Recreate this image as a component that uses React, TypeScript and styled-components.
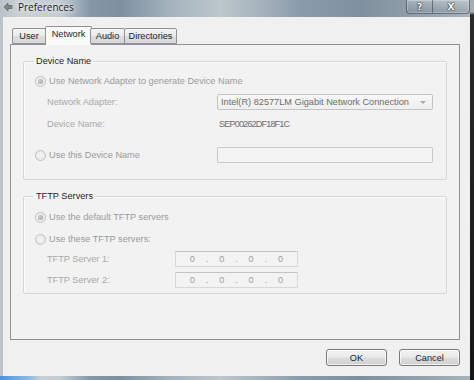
import React from "react";
import styled, { createGlobalStyle, css } from "styled-components";

const Global = createGlobalStyle`
  html, body { margin: 0; padding: 0; background: #1b1b1b; }
  body { font-family: "Liberation Sans", Arial, sans-serif; }
  * { box-sizing: border-box; }
`;

const Frame = styled.div`
  width: 474px;
  height: 380px;
  display: flex;
  overflow: hidden;
  background: #1b1b1b;
`;

const WindowCol = styled.div`
  width: 470px;
  height: 380px;
  display: flex;
  flex-direction: column;
  background:
    linear-gradient(90deg, rgba(60,140,230,0.9) 0, rgba(120,180,230,0.7) 30px, rgba(190,200,205,0) 40px) bottom / 100% 4px no-repeat,
    linear-gradient(90deg, #b9c3c9 0, #c9d1d5 20px, #c3cdd2 60px, #8598a8 90px, #7d90a0 120px, #a4b3bd 170px, #bcc6cc 220px, #a6b3bc 260px, #8a9cab 300px, #7f909e 360px, #8c9ba7 400px, #9aa8b2 440px, #a9b4ba 470px);
`;

const DarkStrip = styled.div`
  width: 4px;
  height: 380px;
  background: linear-gradient(180deg, #a3aeb5 0, #a3aeb5 12px, #2a2a2a 15px, #161616 100%);
`;

const TitleBar = styled.div`
  height: 17px;
  display: flex;
  align-items: flex-start;
  padding-left: 3px;
`;

const TitleIcon = styled.svg`
  width: 11px;
  height: 11px;
  margin-top: 1px;
`;

const TitleText = styled.div`
  margin-left: 4px;
  margin-top: 1px;
  font-family: "Open Sans", "Liberation Sans", sans-serif;
  font-size: 10px;
  line-height: 12px;
  color: #1a1a1a;
  text-shadow: 0 0 6px rgba(255,255,255,0.9), 0 0 3px rgba(255,255,255,0.8);
`;

const CaptionButtons = styled.div`
  margin-left: auto;
  display: flex;
  height: 14px;
  border: 1px solid rgba(40,50,60,0.55);
  border-top: none;
  border-radius: 0 0 4px 4px;
  background: linear-gradient(180deg, rgba(255,255,255,0.25), rgba(255,255,255,0.05) 50%, rgba(0,0,0,0.08));
  box-shadow: inset 0 0 0 1px rgba(255,255,255,0.25);
  overflow: hidden;
`;

const CaptionButton = styled.div<{ $w: number }>`
  width: ${(p) => p.$w}px;
  height: 100%;
  display: flex;
  align-items: center;
  justify-content: center;
  color: #fff;
  font-family: "DejaVu Sans", sans-serif;
  font-weight: bold;
  font-size: 9px;
  text-shadow: 0 0 2px #223, 0 0 1px #000;
  & + & { border-left: 1px solid rgba(40,50,60,0.5); }
`;

const Client = styled.div`
  flex: 1;
  margin: 0 0 4px 3px;
  background: #f0f0f0;
  border: 1px solid #eaeef0;
  border-width: 0 1px 0 0;
  display: flex;
  flex-direction: column;
  padding: 9px 9px 10px 7px;
`;

const TabsRow = styled.div`
  display: flex;
  align-items: flex-end;
  height: 19px;
  margin-bottom: -1px;
  padding-left: 2px;
  position: relative;
  z-index: 1;
`;

const Tab = styled.div<{ $active?: boolean; $w: number }>`
  width: ${(p) => p.$w}px;
  font-size: 9.2px;
  color: #1e1e1e;
  display: flex;
  justify-content: center;
  border: 1px solid #8e9196;
  border-radius: 2px 2px 0 0;
  ${(p) =>
    p.$active
      ? css`
          height: 19px;
          background: #fafafa;
          border-bottom: none;
          padding-top: 2px;
          margin: 0 -1px;
        `
      : css`
          height: 16px;
          margin-bottom: 1px;
          padding-top: 2px;
          background: linear-gradient(180deg, #f4f4f4 0%, #ebebeb 50%, #dddddd 51%, #d8d8d8 100%);
          & + & { margin-left: -1px; }
        `}
`;

const Panel = styled.div`
  flex: 1;
  background: #f2f2f2;
  border: 1px solid #8e9196;
  padding: 9px 12px 0 12px;
  display: flex;
  flex-direction: column;
`;

const Group = styled.fieldset<{ $pt: number; $pb: number; $mt: number }>`
  margin: ${(p) => p.$mt}px 0 0 0;
  padding: ${(p) => p.$pt}px 13px ${(p) => p.$pb}px 11px;
  border: 1px solid #d3d7da;
  border-radius: 2px;
  box-shadow: inset 1px 1px 0 #fbfbfb;
  min-width: 0;
`;

const Legend = styled.legend`
  font-size: 9.2px;
  line-height: 12px;
  color: #1e1e1e;
  padding: 0 2px;
  margin-left: -1px;
`;

const Row = styled.div<{ $mt?: number }>`
  height: 20px;
  display: flex;
  align-items: center;
  margin-top: ${(p) => p.$mt ?? 0}px;
  font-size: 9.2px;
  color: #a2a2a2;
`;

const RadioCell = styled.span<{ $w?: number }>`
  display: flex;
  align-items: center;
  flex: none;
  ${(p) => (p.$w ? `width: ${p.$w}px;` : "")}
`;

const RadioCircle = styled.span<{ $checked?: boolean }>`
  width: 11px;
  height: 11px;
  border-radius: 50%;
  border: 1px solid #c1c1c1;
  background: radial-gradient(circle at 50% 50%, #f4f4f4 0, #e6e6e6 100%);
  display: inline-flex;
  align-items: center;
  justify-content: center;
  flex: none;
  &::after {
    content: "";
    display: ${(p) => (p.$checked ? "block" : "none")};
    width: 5px;
    height: 5px;
    border-radius: 50%;
    background: radial-gradient(circle at 40% 40%, #cfcfcf, #9c9c9c);
  }
`;

const RadioLabel = styled.span`
  margin-left: 3px;
  color: #9a9a9a;
  white-space: nowrap;
`;

const FieldLabel = styled.span<{ $w: number }>`
  margin-left: 12px;
  width: ${(p) => p.$w}px;
  color: #a9a9a9;
  flex: none;
`;

const Value = styled.span`
  margin-left: 2px;
  color: #6e6e6e;
  letter-spacing: -0.9px;
`;

const Combo = styled.div`
  flex: 1;
  height: 16px;
  border: 1px solid #c4c4c4;
  border-radius: 2px;
  background: linear-gradient(180deg, #f7f7f7, #efefef);
  display: flex;
  align-items: center;
  padding: 0 4px 0 3px;
  color: #6c6c6c;
`;

const ComboText = styled.span`
  flex: 1;
  white-space: nowrap;
`;

const Arrow = styled.span`
  width: 0;
  height: 0;
  border-left: 3px solid transparent;
  border-right: 3px solid transparent;
  border-top: 3px solid #a8a8a8;
  margin-right: 2px;
`;

const TextBox = styled.div`
  flex: 1;
  height: 16px;
  border: 1px solid #c8c8c8;
  border-radius: 1px;
  background: #f3f3f3;
`;

const IpBox = styled.div`
  width: 123px;
  height: 16px;
  border: 1px solid #d8d8d8;
  border-top-color: #c4c4c4;
  background: #f3f3f3;
  display: flex;
  align-items: center;
  padding-left: 9px;
  color: #9c9c9c;
`;

const IpPart = styled.span`
  width: 14.7px;
  text-align: center;
`;

const ButtonRow = styled.div`
  display: flex;
  justify-content: flex-end;
  gap: 12px;
  margin-top: 9px;
`;

const DlgButton = styled.div`
  width: 61px;
  height: 17px;
  border: 1px solid #7a7a7a;
  border-radius: 3px;
  background: linear-gradient(180deg, #f2f2f2 0%, #ebebeb 48%, #dddddd 52%, #cfcfcf 100%);
  box-shadow: inset 0 0 0 1px rgba(255,255,255,0.7);
  display: flex;
  align-items: center;
  justify-content: center;
  font-size: 9.2px;
  color: #1e1e1e;
`;

const Ip = () => (
  <IpBox>
    <IpPart>0</IpPart>
    <IpPart>.</IpPart>
    <IpPart>0</IpPart>
    <IpPart>.</IpPart>
    <IpPart>0</IpPart>
    <IpPart>.</IpPart>
    <IpPart>0</IpPart>
  </IpBox>
);

export default function App() {
  return (
    <>
      <Global />
      <Frame>
        <WindowCol>
          <TitleBar>
            <TitleIcon viewBox="0 0 11 11">
              <path d="M1 6 L5 2 L5 4.5 L9 4.5 L9 7.5 L5 7.5 L5 10 Z" fill="#7d8a84" stroke="#4e5a55" strokeWidth="0.6" />
            </TitleIcon>
            <TitleText>Preferences</TitleText>
            <CaptionButtons>
              <CaptionButton $w={25}>?</CaptionButton>
              <CaptionButton $w={37}>X</CaptionButton>
            </CaptionButtons>
          </TitleBar>
          <Client>
            <TabsRow>
              <Tab $w={34}>User</Tab>
              <Tab $w={47} $active>Network</Tab>
              <Tab $w={35}>Audio</Tab>
              <Tab $w={53}>Directories</Tab>
            </TabsRow>
            <Panel>
              <Group $mt={1} $pt={4} $pb={14}>
                <Legend>Device Name</Legend>
                <Row>
                  <RadioCell>
                    <RadioCircle $checked />
                    <RadioLabel>Use Network Adapter to generate Device Name</RadioLabel>
                  </RadioCell>
                </Row>
                <Row $mt={1}>
                  <FieldLabel $w={170}>Network Adapter:</FieldLabel>
                  <Combo>
                    <ComboText>Intel(R) 82577LM Gigabit Network Connection</ComboText>
                    <Arrow />
                  </Combo>
                </Row>
                <Row $mt={2}>
                  <FieldLabel $w={170}>Device Name:</FieldLabel>
                  <Value>SEP00262DF18F1C</Value>
                </Row>
                <Row $mt={11}>
                  <RadioCell $w={182}>
                    <RadioCircle />
                    <RadioLabel>Use this Device Name</RadioLabel>
                  </RadioCell>
                  <TextBox />
                </Row>
              </Group>
              <Group $mt={10} $pt={5} $pb={3}>
                <Legend>TFTP Servers</Legend>
                <Row>
                  <RadioCell>
                    <RadioCircle $checked />
                    <RadioLabel>Use the default TFTP servers</RadioLabel>
                  </RadioCell>
                </Row>
                <Row $mt={2}>
                  <RadioCell>
                    <RadioCircle />
                    <RadioLabel>Use these TFTP servers:</RadioLabel>
                  </RadioCell>
                </Row>
                <Row>
                  <FieldLabel $w={128}>TFTP Server 1:</FieldLabel>
                  <Ip />
                </Row>
                <Row $mt={1}>
                  <FieldLabel $w={128}>TFTP Server 2:</FieldLabel>
                  <Ip />
                </Row>
              </Group>
            </Panel>
            <ButtonRow>
              <DlgButton>OK</DlgButton>
              <DlgButton>Cancel</DlgButton>
            </ButtonRow>
          </Client>
        </WindowCol>
        <DarkStrip />
      </Frame>
    </>
  );
}
